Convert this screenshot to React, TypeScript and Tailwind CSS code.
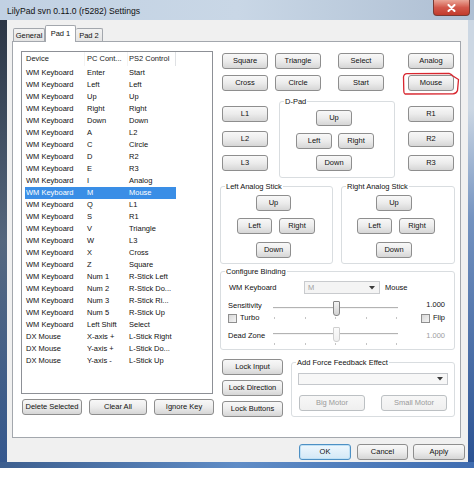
import type { ReactNode } from "react"
import { clsx, type ClassValue } from "clsx"
import { twMerge } from "tailwind-merge"

function cn(...inputs: ClassValue[]) {
  return twMerge(clsx(inputs))
}

const bindings = [
  ["WM Keyboard", "Enter", "Start"],
  ["WM Keyboard", "Left", "Left"],
  ["WM Keyboard", "Up", "Up"],
  ["WM Keyboard", "Right", "Right"],
  ["WM Keyboard", "Down", "Down"],
  ["WM Keyboard", "A", "L2"],
  ["WM Keyboard", "C", "Circle"],
  ["WM Keyboard", "D", "R2"],
  ["WM Keyboard", "E", "R3"],
  ["WM Keyboard", "I", "Analog"],
  ["WM Keyboard", "M", "Mouse"],
  ["WM Keyboard", "Q", "L1"],
  ["WM Keyboard", "S", "R1"],
  ["WM Keyboard", "V", "Triangle"],
  ["WM Keyboard", "W", "L3"],
  ["WM Keyboard", "X", "Cross"],
  ["WM Keyboard", "Z", "Square"],
  ["WM Keyboard", "Num 1", "R-Stick Left"],
  ["WM Keyboard", "Num 2", "R-Stick Do..."],
  ["WM Keyboard", "Num 3", "R-Stick Ri..."],
  ["WM Keyboard", "Num 5", "R-Stick Up"],
  ["WM Keyboard", "Left Shift", "Select"],
  ["DX Mouse", "X-axis +", "L-Stick Right"],
  ["DX Mouse", "Y-axis +", "L-Stick Do..."],
  ["DX Mouse", "Y-axis -", "L-Stick Up"],
]

const SELECTED = 10

function Btn({
  children,
  className,
  disabled,
  primary,
}: {
  children: ReactNode
  className?: string
  disabled?: boolean
  primary?: boolean
}) {
  return (
    <button
      className={cn(
        "block h-[16px] shrink-0 rounded-[3px] border bg-linear-to-b text-center leading-[14px]",
        disabled
          ? "border-[#bcc0c3] from-[#f7f7f7] to-[#efefef] text-[#9a9a9a]"
          : primary
            ? "border-[#4d90c4] from-[#eef7fd] to-[#d3e8f6] text-[#111] shadow-[inset_0_0_0_1px_#bfe0f5]"
            : "border-[#8e8e8e] from-[#f8f8f8] via-[#ececec] to-[#d6d6d6] text-[#111]",
        className
      )}
    >
      {children}
    </button>
  )
}

function Group({ label, className, children }: { label: string; className?: string; children?: ReactNode }) {
  return (
    <div className={cn("shrink-0 rounded-[3px] border border-[#d9dde0]", className)}>
      <div className="-mt-[5px] ml-[4px] w-fit bg-white px-[1px] leading-[9px] text-[#111]">{label}</div>
      {children}
    </div>
  )
}

function Check() {
  return <div className="h-[9px] w-[9px] shrink-0 border border-[#8f8f8f] bg-linear-to-br from-[#d8d8d8] to-[#f4f4f4]" />
}

function Arrow() {
  return (
    <svg width="6" height="4" viewBox="0 0 6 4" className="shrink-0">
      <path d="M0 0 H6 L3 3.5 Z" fill="#3a3a3a" />
    </svg>
  )
}

function Slider({ faded }: { faded?: boolean }) {
  return (
    <div className="relative h-[24px] w-[125px] shrink-0">
      <div className="mt-[8px] h-[2px] border-t border-b border-t-[#b3b3b3] border-b-[#f4f4f4] bg-[#dedede]" />
      <div className="mt-[8px] flex justify-between px-[1px]">
        {[0, 1, 2, 3, 4].map((i) => (
          <div key={i} className="h-[2px] w-[1px] bg-[#c4c4c4]" />
        ))}
      </div>
      <div
        className={cn(
          "absolute left-[60px] top-[2px] h-[15px] w-[7px] rounded-b-[3px] rounded-t-[1px] border bg-linear-to-b",
          faded ? "border-[#cfcfcf] from-[#fbfbfb] to-[#f0f0f0]" : "border-[#858585] from-[#f4f4f4] to-[#d2d2d2]"
        )}
      />
    </div>
  )
}

function BindingList() {
  return (
    <div className="h-[343px] w-[192px] border border-[#8d9096] bg-white">
      <div className="flex h-[14px] leading-[14px] text-[#222]">
        <div className="w-[63px] border-r border-[#f3f3f3] pl-[4px]">Device</div>
        <div className="w-[43px] border-r border-[#f3f3f3] pl-[2px]">PC Cont...</div>
        <div className="w-[48px] border-r border-[#dfe1e4] pl-[1px]">PS2 Control</div>
      </div>
      <div className="mt-[1px]">
        {bindings.map(([device, pc, ps2], i) => (
          <div
            key={i}
            className={cn(
              "ml-[3px] flex h-[12px] w-[151px] leading-[12px]",
              i === SELECTED ? "bg-[#3a8ee6] text-white" : "text-[#111]"
            )}
          >
            <div className="w-[60px] pl-[1px]">{device}</div>
            <div className="w-[43px] pl-[2px]">{pc}</div>
            <div className="w-[48px] pl-[1px]">{ps2}</div>
          </div>
        ))}
      </div>
    </div>
  )
}

function MouseButton() {
  return (
    <div className="relative ml-[24px]">
      <Btn className="w-[46px]">Mouse</Btn>
      {/* red marker drawn over the screenshot */}
      <svg className="absolute -left-[6px] -top-[3px]" width="58" height="24" viewBox="0 0 58 24">
        <path
          d="M1.5 5 Q2 1.6 5 1.6 L47 1.4 Q49 2 51 4 L56.5 7.5 L55.5 18.5 Q54.5 21.5 51 21.8 L3 22 Q1.8 21.5 1.8 19 Z"
          fill="none"
          stroke="#d8262f"
          strokeWidth="1.3"
        />
      </svg>
    </div>
  )
}

function PadPanel() {
  return (
    <div className="flex h-[397px] border border-[#a3a7ad] bg-white pl-[8px] pt-[9px]">
      {/* bindings column */}
      <div className="flex w-[192px] flex-col">
        <BindingList />
        <div className="mt-[5px] flex">
          <Btn className="ml-[1px] w-[60px]">Delete Selected</Btn>
          <Btn className="ml-[7px] w-[58px]">Clear All</Btn>
          <Btn className="ml-[7px] w-[60px]">Ignore Key</Btn>
        </div>
      </div>

      {/* controller column */}
      <div className="ml-[7px] flex w-[236px] flex-col">
        <div className="mt-[2px] flex">
          <Btn className="ml-[2px] w-[46px]">Square</Btn>
          <Btn className="ml-[7px] w-[46px]">Triangle</Btn>
          <Btn className="ml-[17px] w-[46px]">Select</Btn>
          <Btn className="ml-[24px] w-[46px]">Analog</Btn>
        </div>
        <div className="mt-[6px] flex">
          <Btn className="ml-[2px] w-[46px]">Cross</Btn>
          <Btn className="ml-[7px] w-[46px]">Circle</Btn>
          <Btn className="ml-[17px] w-[46px]">Start</Btn>
          <MouseButton />
        </div>

        <div className="mt-[10px] flex">
          <div className="ml-[2px] flex w-[46px] flex-col">
            <Btn className="mt-[5px] w-[46px]">L1</Btn>
            <Btn className="mt-[9px] w-[46px]">L2</Btn>
            <Btn className="mt-[8px] w-[46px]">L3</Btn>
          </div>
          <Group label="D-Pad" className="ml-[11px] h-[77px] w-[116px]">
            <Btn className="ml-[36px] mt-[4px] w-[36px]">Up</Btn>
            <div className="mt-[7px] flex">
              <Btn className="ml-[16px] w-[36px]">Left</Btn>
              <Btn className="ml-[6px] w-[36px]">Right</Btn>
            </div>
            <Btn className="ml-[36px] mt-[6px] w-[36px]">Down</Btn>
          </Group>
          <div className="ml-[13px] flex w-[46px] flex-col">
            <Btn className="mt-[5px] w-[46px]">R1</Btn>
            <Btn className="mt-[9px] w-[46px]">R2</Btn>
            <Btn className="mt-[8px] w-[46px]">R3</Btn>
          </div>
        </div>

        <div className="mt-[8px] flex">
          <Group label="Left Analog Stick" className="h-[78px] w-[113px]">
            <Btn className="ml-[35px] mt-[4px] w-[35px]">Up</Btn>
            <div className="mt-[7px] flex">
              <Btn className="ml-[16px] w-[35px]">Left</Btn>
              <Btn className="ml-[7px] w-[36px]">Right</Btn>
            </div>
            <Btn className="ml-[35px] mt-[8px] w-[35px]">Down</Btn>
          </Group>
          <Group label="Right Analog Stick" className="ml-[8px] h-[78px] w-[114px]">
            <Btn className="ml-[34px] mt-[4px] w-[36px]">Up</Btn>
            <div className="mt-[7px] flex">
              <Btn className="ml-[15px] w-[35px]">Left</Btn>
              <Btn className="ml-[7px] w-[36px]">Right</Btn>
            </div>
            <Btn className="ml-[34px] mt-[8px] w-[36px]">Down</Btn>
          </Group>
        </div>

        <Group label="Configure Binding" className="mt-[7px] h-[79px] w-[235px]">
          <div className="mt-[5px] flex h-[13px] items-center">
            <div className="w-[83px] pl-[8px] text-[#111]">WM Keyboard</div>
            <div className="flex h-[13px] w-[76px] items-center justify-between border border-[#c9cbce] bg-[#f4f4f4] pl-[3px] pr-[4px] text-[#a0a0a0]">
              M
              <Arrow />
            </div>
            <div className="ml-[5px] text-[#111]">Mouse</div>
          </div>
          <div className="mt-[5px] flex h-[24px]">
            <div className="w-[52px] pl-[7px] text-[#111]">
              <div className="h-[14px] leading-[14px]">Sensitivity</div>
              <div className="flex h-[10px] items-center gap-[3px]">
                <Check />
                Turbo
              </div>
            </div>
            <Slider />
            <div className="flex flex-1 flex-col items-end pr-[9px] text-[#111]">
              <div className="h-[11px] leading-[11px]">1.000</div>
              <div className="mt-[3px] flex h-[10px] items-center gap-[3px]">
                <Check />
                Flip
              </div>
            </div>
          </div>
          <div className="mt-[2px] flex h-[24px]">
            <div className="w-[52px] pl-[7px] leading-[22px] text-[#111]">Dead Zone</div>
            <Slider faded />
            <div className="flex-1 pr-[9px] text-right leading-[22px] text-[#9d9d9d]">1.000</div>
          </div>
        </Group>

        <div className="mt-[9px] flex">
          <div className="ml-[2px] flex w-[61px] flex-col gap-[5px]">
            <Btn className="w-[61px]">Lock Input</Btn>
            <Btn className="w-[61px]">Lock Direction</Btn>
            <Btn className="w-[61px]">Lock Buttons</Btn>
          </div>
          <Group label="Add Force Feedback Effect" className="ml-[8px] mt-[3px] h-[55px] w-[164px]">
            <div className="ml-[6px] mt-[6px] flex h-[12px] w-[150px] items-center justify-end border border-[#c5c8cc] bg-[#f7f7f7] pr-[4px]">
              <Arrow />
            </div>
            <div className="mt-[10px] flex">
              <Btn disabled className="ml-[7px] w-[66px]">Big Motor</Btn>
              <Btn disabled className="ml-[16px] w-[66px]">Small Motor</Btn>
            </div>
          </Group>
        </div>
      </div>
    </div>
  )
}

export default function App() {
  return (
    <div className="h-[484px] w-[474px] overflow-hidden bg-white font-['Liberation_Sans',Arial,sans-serif] text-[7.5px]">
      <div className="flex h-[468px] flex-col">
        {/* title bar */}
        <div className="flex h-[20px] shrink-0 bg-linear-to-r from-[#c1d1e3] via-[#c9d7e6] to-[#aebfd3]">
          <div className="pl-[7px] pt-[1px] text-[8.6px] leading-[20px] text-[#111]">
            LilyPad svn 0.11.0 (r5282) Settings
          </div>
          <div className="ml-auto mr-[4px] flex h-[16px] w-[37px] items-center justify-center rounded-b-[4px] border border-t-0 border-[#7a3a33] bg-linear-to-b from-[#e9a597] via-[#d2584b] to-[#c23b2c]">
            <svg width="9" height="8" viewBox="0 0 9 8">
              <path d="M1.5 1 L7.5 7 M7.5 1 L1.5 7" stroke="#fff" strokeWidth="2" strokeLinecap="round" />
            </svg>
          </div>
        </div>

        <div className="flex flex-1">
          {/* left frame */}
          <div className="w-[7px] bg-linear-to-b from-[#2c3645] via-[#55677e] to-[#35588e]" />

          {/* client area */}
          <div className="flex w-[461px] flex-col bg-[#f0f0f0] pl-[5px] pt-[5px]">
            <div className="-mb-[1px] ml-[1px] flex items-end">
              <div className="h-[14px] w-[32px] rounded-t-[2px] border border-b-0 border-[#a3a7ad] bg-linear-to-b from-[#f2f2f2] to-[#e3e3e3] text-center leading-[13px] text-[#111]">
                General
              </div>
              <div className="relative z-10 h-[17px] w-[31px] rounded-t-[2px] border border-b-0 border-[#a3a7ad] bg-white text-center leading-[15px] text-[#111]">
                Pad 1
              </div>
              <div className="h-[14px] w-[27px] rounded-t-[2px] border border-b-0 border-l-0 border-[#a3a7ad] bg-linear-to-b from-[#f2f2f2] to-[#e3e3e3] text-center leading-[13px] text-[#111]">
                Pad 2
              </div>
            </div>
            <div className="w-[449px]">
              <PadPanel />
            </div>
            <div className="mt-[6px] flex justify-end pr-[3px]">
              <Btn primary className="w-[52px]">OK</Btn>
              <Btn className="ml-[6px] w-[51px]">Cancel</Btn>
              <Btn className="ml-[5px] w-[52px]">Apply</Btn>
            </div>
          </div>

          {/* right frame */}
          <div className="w-[6px] bg-linear-to-b from-[#ccd7e3] from-20% via-[#7493c0] via-45% to-[#2b5293]" />
        </div>

        {/* bottom frame */}
        <div className="h-[6px] shrink-0 bg-linear-to-r from-[#3d5f8f] via-[#5f8cc6] to-[#3f6cb0]" />
      </div>
    </div>
  )
}
